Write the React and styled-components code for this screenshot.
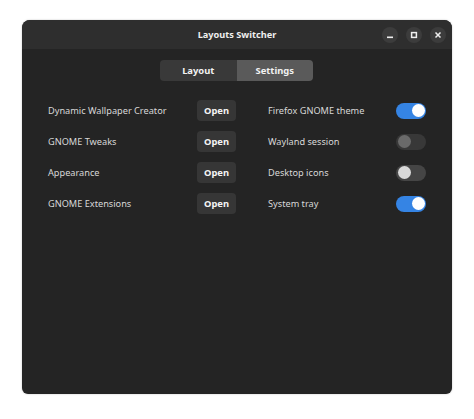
import React from "react";
import styled, { createGlobalStyle } from "styled-components";

const GlobalStyle = createGlobalStyle`
  html, body {
    margin: 0;
    padding: 0;
    background: #ffffff;
  }
  body {
    font-family: "Noto Sans", "Open Sans", sans-serif;
  }
`;

const apps = ["Dynamic Wallpaper Creator", "GNOME Tweaks", "Appearance", "GNOME Extensions"];

const toggles = [
  { label: "Firefox GNOME theme", on: true },
  { label: "Wayland session", on: false, disabled: true },
  { label: "Desktop icons", on: false },
  { label: "System tray", on: true },
];

function App() {
  return (
    <Page>
      <GlobalStyle />
      <Window>
        <HeaderBar>
          <Title>Layouts Switcher</Title>
          <WindowControls>
            <ControlButton>
              <svg width="8" height="8" viewBox="0 0 8 8">
                <rect x="1" y="5.5" width="6" height="1.6" fill="#eee" />
              </svg>
            </ControlButton>
            <ControlButton>
              <svg width="8" height="8" viewBox="0 0 8 8">
                <rect x="1.6" y="1.6" width="4.8" height="4.8" fill="none" stroke="#eee" strokeWidth="1.5" />
              </svg>
            </ControlButton>
            <ControlButton>
              <svg width="8" height="8" viewBox="0 0 8 8">
                <path d="M1.5 1.5 L6.5 6.5 M6.5 1.5 L1.5 6.5" stroke="#eee" strokeWidth="1.5" />
              </svg>
            </ControlButton>
          </WindowControls>
        </HeaderBar>

        <Content>
          <Tabs>
            <Tab>Layout</Tab>
            <Tab active>Settings</Tab>
          </Tabs>

          <Columns>
            <Column>
              {apps.map((name) => (
                <Row key={name}>
                  <Label>{name}</Label>
                  <OpenButton>Open</OpenButton>
                </Row>
              ))}
            </Column>
            <Column>
              {toggles.map((t) => (
                <Row key={t.label}>
                  <Label>{t.label}</Label>
                  <Switch on={t.on ? 1 : 0} disabled={t.disabled ? 1 : 0}>
                    <Knob on={t.on ? 1 : 0} disabled={t.disabled ? 1 : 0} />
                  </Switch>
                </Row>
              ))}
            </Column>
          </Columns>
        </Content>
      </Window>
    </Page>
  );
}

export default App;

const Page = styled.div`
  padding: 20px 22px;
`;

const Window = styled.div`
  width: 430px;
  height: 374px;
  background-color: #242424;
  border-radius: 8px 8px 6px 6px;
  overflow: hidden;
  box-shadow: 0 0 2px rgba(0, 0, 0, 0.25);
  display: flex;
  flex-direction: column;
`;

const HeaderBar = styled.div`
  height: 29px;
  background-color: #2e2e2e;
  display: flex;
  align-items: center;
  justify-content: center;
  position: relative;
  flex-shrink: 0;
`;

const Title = styled.div`
  color: #f0f0f0;
  font-size: 9.2px;
  font-weight: 700;
`;

const WindowControls = styled.div`
  position: absolute;
  right: 6px;
  top: 7px;
  display: flex;
  gap: 8px;
`;

const ControlButton = styled.div`
  width: 16px;
  height: 16px;
  border-radius: 50%;
  background-color: #3c3c3c;
  display: flex;
  align-items: center;
  justify-content: center;
`;

const Content = styled.div`
  padding: 11px 26px 0;
  display: flex;
  flex-direction: column;
  align-items: center;
`;

const Tabs = styled.div`
  display: flex;
  border-radius: 4px;
  overflow: hidden;
  margin-left: -1px;
`;

const Tab = styled.div`
  width: 76.5px;
  height: 21px;
  display: flex;
  align-items: center;
  justify-content: center;
  font-size: 9.4px;
  font-weight: 700;
  color: #f2f2f2;
  background-color: ${(p) => (p.active ? "#5a5a5a" : "#393939")};
`;

const Columns = styled.div`
  align-self: stretch;
  display: grid;
  grid-template-columns: 188px 158px;
  column-gap: 32px;
  margin-top: 19px;
`;

const Column = styled.div`
  display: flex;
  flex-direction: column;
  gap: 10px;
`;

const Row = styled.div`
  height: 21px;
  display: flex;
  align-items: center;
  justify-content: space-between;
`;

const Label = styled.span`
  color: #d8d8d8;
  font-size: 9.2px;
`;

const OpenButton = styled.div`
  width: 39px;
  height: 21px;
  border-radius: 4px;
  background-color: #363636;
  color: #f4f4f4;
  font-size: 9.4px;
  font-weight: 700;
  display: flex;
  align-items: center;
  justify-content: center;
`;

const Switch = styled.div`
  width: 30px;
  height: 16px;
  border-radius: 8px;
  background-color: ${(p) => (p.on ? "#3584e4" : p.disabled ? "#383838" : "#454545")};
  position: relative;
`;

const Knob = styled.div`
  position: absolute;
  top: 1.5px;
  left: ${(p) => (p.on ? "15.5px" : "1.5px")};
  width: 13px;
  height: 13px;
  border-radius: 50%;
  background-color: ${(p) => (p.on ? "#ffffff" : p.disabled ? "#6a6a6a" : "#d9d9d9")};
`;
